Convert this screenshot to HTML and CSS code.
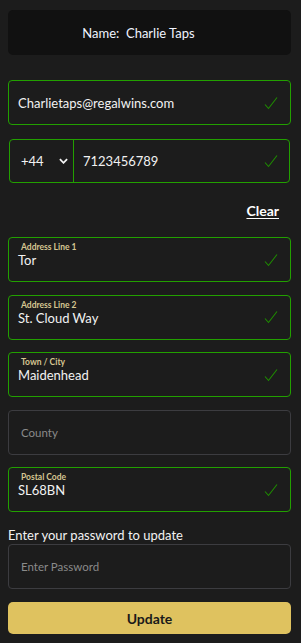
FILE: index.html
```html
<!DOCTYPE html>
<html>
<head>
<meta charset="utf-8">
<link rel="stylesheet" href="styles.css">
</head>
<body>
<div class="page">
  <div class="name-box">Name:&nbsp; Charlie Taps</div>

  <div class="field valid email">
    <span class="value">Charlietaps@regalwins.com</span>
    <svg class="check" viewBox="0 0 14 14"><path d="M1 8.5 L4.5 12.5 L13 1.5"/></svg>
  </div>

  <div class="phone valid">
    <div class="code">
      <span>+44</span>
      <svg class="chev" viewBox="0 0 10 6"><path d="M1 1 L5 5 L9 1"/></svg>
    </div>
    <div class="phone-num">
      <span class="value">7123456789</span>
      <svg class="check" viewBox="0 0 14 14"><path d="M1 8.5 L4.5 12.5 L13 1.5"/></svg>
    </div>
  </div>

  <div class="clear-row"><a class="clear">Clear</a></div>

  <div class="field valid labelled">
    <div class="text"><span class="label">Address Line 1</span><span class="value">Tor</span></div>
    <svg class="check" viewBox="0 0 14 14"><path d="M1 8.5 L4.5 12.5 L13 1.5"/></svg>
  </div>

  <div class="field valid labelled">
    <div class="text"><span class="label">Address Line 2</span><span class="value">St. Cloud Way</span></div>
    <svg class="check" viewBox="0 0 14 14"><path d="M1 8.5 L4.5 12.5 L13 1.5"/></svg>
  </div>

  <div class="field valid labelled">
    <div class="text"><span class="label">Town / City</span><span class="value">Maidenhead</span></div>
    <svg class="check" viewBox="0 0 14 14"><path d="M1 8.5 L4.5 12.5 L13 1.5"/></svg>
  </div>

  <div class="field empty">
    <span class="placeholder">County</span>
  </div>

  <div class="field valid labelled">
    <div class="text"><span class="label">Postal Code</span><span class="value">SL68BN</span></div>
    <svg class="check" viewBox="0 0 14 14"><path d="M1 8.5 L4.5 12.5 L13 1.5"/></svg>
  </div>

  <div class="pw-label">Enter your password to update</div>
  <div class="field empty pw">
    <span class="placeholder small">Enter Password</span>
  </div>

  <button class="update">Update</button>
</div>
</body>
</html>
```

FILE: styles.css
```css
* { box-sizing: border-box; }
html, body {
  margin: 0;
  padding: 0;
  background: #1c1c1c;
}
body {
  font-family: Lato, "Noto Sans", sans-serif;
  color: #f2f2f2;
}
.page {
  padding: 10px 10px 0 8px;
  display: flex;
  flex-direction: column;
}
.name-box {
  height: 45px;
  background: #111111;
  border-radius: 5px;
  display: flex;
  align-items: center;
  justify-content: center;
  padding-right: 22px;
  font-size: 13px;
  color: #f0f4ff;
}
.field {
  height: 45px;
  border: 1px solid #22a000;
  border-radius: 4px;
  display: flex;
  align-items: center;
  padding: 0 12px 0 9px;
  margin-top: 12.5px;
}
.field.email { margin-top: 25px; }
.field.empty { border-color: #3c3c40; padding-left: 12px; }
.value {
  font-size: 13px;
  color: #f2f2f2;
  flex: 1;
}
.check {
  width: 14px;
  height: 14px;
  flex: none;
}
.check path {
  fill: none;
  stroke: #1f8c00;
  stroke-width: 1.1;
}
.phone {
  margin: 14px 1px 0 1px;
  height: 44px;
  border: 1px solid #22a000;
  border-radius: 4px;
  display: flex;
}
.code {
  width: 64px;
  border-right: 1px solid #22a000;
  display: flex;
  align-items: center;
  padding: 0 5px 0 11px;
  font-size: 13px;
  justify-content: space-between;
}
.chev { width: 9px; height: 6px; }
.chev path { fill: none; stroke: #f2f2f2; stroke-width: 2; }
.phone-num {
  flex: 1;
  display: flex;
  align-items: center;
  padding: 0 11px 0 9px;
}
.clear-row {
  height: 54px;
  display: flex;
  align-items: center;
  justify-content: flex-end;
  padding-right: 12px;
}
.clear {
  font-size: 14px;
  font-weight: 700;
  color: #ffffff;
  text-decoration: underline;
  text-underline-offset: 2px;
}
.labelled {
  margin-top: 12.5px;
}
.clear-row + .labelled { margin-top: 0; }
.text {
  flex: 1;
  display: flex;
  flex-direction: column;
  align-self: flex-start;
  padding-top: 4px;
}
.label {
  font-size: 8.5px;
  font-weight: 700;
  color: #d6c692;
  padding-left: 3px;
  line-height: 10px;
}
.text .value { line-height: 16px; }
.placeholder {
  font-size: 11.5px;
  color: #8a8a8a;
}
.pw-label {
  margin-top: 14px;
  font-size: 13px;
  color: #f2f2f2;
  line-height: 18px;
}
.field.pw { margin-top: 0; }
.update {
  margin-top: 13px;
  height: 32px;
  border: none;
  border-radius: 5px;
  background: #dfc25f;
  color: #1a1a1a;
  font-family: Lato, "Noto Sans", sans-serif;
  font-weight: 700;
  font-size: 14px;
}
```
